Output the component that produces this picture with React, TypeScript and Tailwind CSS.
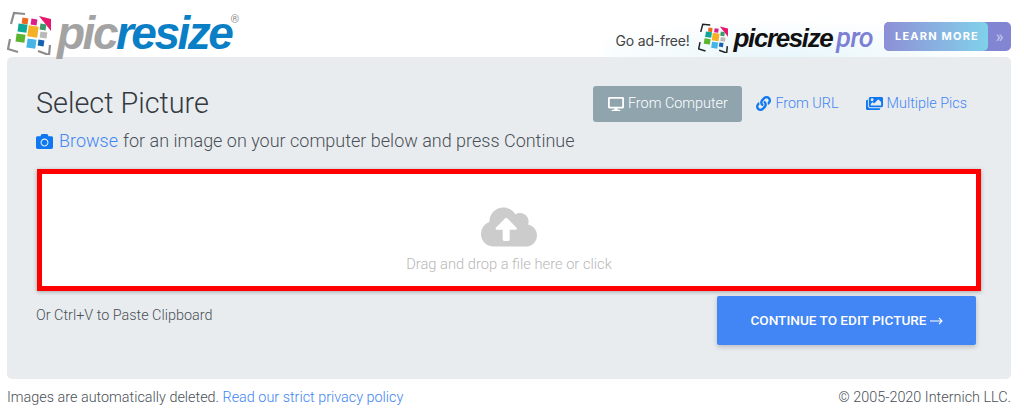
import { FaCamera, FaCloudUploadAlt, FaDesktop, FaImages, FaLink } from "react-icons/fa";

/** Square picture mark used in both logos */
function LogoMark({ size, bracket }: { size: number; bracket: string }) {
  return (
    <svg width={size} height={size} viewBox="0 0 44 44" className="shrink-0">
      <g fill="none" stroke={bracket} strokeWidth="2.2">
        <path d="M18 3 L7 2 L4 13" />
        <path d="M3 28 L1 38 L11 41" />
        <path d="M31 40 L42 44 L43 34" />
      </g>
      <polygon points="32,5 44,8 44,20" fill="#e6176f" />
      <rect x="15" y="7" width="6" height="6" fill="#ee6a1f" transform="rotate(8 18 10)" />
      <rect x="24" y="8" width="6" height="6" fill="#d81f8c" transform="rotate(8 27 11)" />
      <rect x="11" y="13" width="9" height="8" fill="#0fa898" transform="rotate(8 15 17)" />
      <rect x="33" y="13" width="6" height="6" fill="#3c9a6b" transform="rotate(8 36 16)" />
      <rect x="21" y="15" width="10" height="11" fill="#f6b025" transform="rotate(8 26 20)" />
      <rect x="33" y="21" width="7" height="6" fill="#b9b9b9" transform="rotate(8 36 24)" />
      <rect x="9" y="23" width="9" height="8" fill="#5bb531" transform="rotate(8 13 27)" />
      <rect x="20" y="28" width="9" height="9" fill="#45b4e6" transform="rotate(8 24 32)" />
      <rect x="31" y="29" width="6" height="6" fill="#1463b0" transform="rotate(8 34 32)" />
    </svg>
  );
}

export default function App() {
  return (
    <div className="h-[419px] w-[1024px] overflow-hidden bg-white font-['Roboto',sans-serif] text-[#495057]">
      <header className="flex h-[57px] items-start justify-between">
        <div className="ml-[7px] mt-[11px] flex items-start">
          <LogoMark size={44} bracket="#8c8c8c" />
          <div className="ml-[6px] mt-[-6px] font-['Liberation_Sans',sans-serif] text-[46px] font-bold italic leading-[56px] tracking-[-2.5px]">
            <span className="text-[#a3a3a3]">pic</span>
            <span className="text-[#0b7fc6]">resize</span>
          </div>
          <span className="ml-[-1px] mt-[3px] text-[11px] leading-[11px] text-[#8f8f8f]">®</span>
        </div>
        <div className="mr-[13px] mt-[19px] flex h-[38px] items-center bg-[radial-gradient(ellipse_at_45%_100%,#e8f6fb_0%,#ffffff_70%)] pl-[13px]">
          <span className="mt-[4px] font-['Inter',sans-serif] text-[14px] tracking-[-0.2px] text-[#444]">Go ad-free!</span>
          <span className="ml-[8px]">
            <LogoMark size={30} bracket="#222" />
          </span>
          <span className="ml-[6px] font-['Liberation_Sans',sans-serif] text-[26px] font-bold italic leading-none tracking-[-1.4px] text-[#111]">
            picresize
          </span>
          <span className="ml-[4px] font-['Roboto',sans-serif] text-[27px] font-medium italic leading-none tracking-[-0.6px] text-[#7c7fd4]">
            pro
          </span>
          <div className="mb-[3px] ml-[11px] flex h-[29px] w-[127px] overflow-hidden rounded-[5px] bg-[#8286d2]">
            <div className="flex w-[104px] items-center justify-center rounded-r-[5px] bg-gradient-to-r from-[#8d8fd6] to-[#7fd2ea] pl-[2px] font-['Inter',sans-serif] text-[11px] font-bold tracking-[1.2px] text-white">
              LEARN MORE
            </div>
            <div className="flex flex-1 items-center justify-center text-[17px] text-[#c9cbf0]">»</div>
          </div>
        </div>
      </header>

      <main className="ml-[7px] mr-[13px] h-[322px] rounded-[5px] bg-[#e9ecef] px-[30px]">
        <div className="flex h-[112px] justify-between">
          <div>
            <h1 className="-ml-px mt-[29px] text-[28.8px] font-light leading-[34px] text-[#343a40]">Select Picture</h1>
            <p className="-ml-px mt-[9px] flex items-center text-[18px] font-light leading-[24px]">
              <FaCamera className="mr-[5px] text-[17px] text-[#0d78f2]" />
              <a className="ml-px text-[#4285f4]">Browse</a>
              <span className="ml-[5px]">for an image on your computer below and press Continue</span>
            </p>
          </div>
          <nav className="mr-[14px] mt-[29px] flex h-[36px] items-center text-[14.4px] font-light">
            <button className="flex h-[36px] w-[149px] items-center justify-center gap-[4px] rounded-[3px] bg-[#90a4ae] text-white">
              <FaDesktop className="text-[16px]" />
              From Computer
            </button>
            <a className="ml-[14px] flex items-center gap-[4px] text-[#4285f4]">
              <FaLink className="text-[15px] text-[#0d78f2]" />
              From URL
            </a>
            <a className="ml-[27px] flex items-center gap-[4px] text-[#4285f4]">
              <FaImages className="text-[17px] text-[#0d78f2]" />
              Multiple Pics
            </a>
          </nav>
        </div>

        <div className="flex h-[122px] flex-col items-center border-[5px] border-[#ff0000] bg-white shadow-[0_1px_4px_rgba(0,0,0,0.3)]">
          <FaCloudUploadAlt className="mt-[25px] text-[56px] leading-none text-[#cccccc]" />
          <span className="-mt-[1px] text-[14.7px] font-light leading-[20px] text-[#b8b8b8]">Drag and drop a file here or click</span>
        </div>

        <div className="flex items-start justify-between pr-[5px] pt-[5px]">
          <span className="-ml-px mt-[10px] text-[14.4px] font-light leading-[20px]">Or Ctrl+V to Paste Clipboard</span>
          <button className="flex h-[49px] w-[259px] items-center justify-center gap-[3px] rounded-[2px] bg-[#4285f4] text-[13.6px] font-medium text-white shadow-[0_2px_5px_rgba(0,0,0,0.2)]">
            CONTINUE TO EDIT PICTURE
            <svg width="13" height="8" viewBox="0 0 13 8" fill="none" stroke="currentColor" strokeWidth="1.1">
              <path d="M0 4 H12 M9 1 L12 4 L9 7" />
            </svg>
          </button>
        </div>
      </main>

      <footer className="ml-[7px] mr-[13px] mt-[9px] flex justify-between text-[14.4px] font-light leading-[20px]">
        <p>
          Images are automatically deleted. <a className="text-[#4285f4]">Read our strict privacy policy</a>
        </p>
        <p>© 2005-2020 Internich LLC.</p>
      </footer>
    </div>
  );
}
